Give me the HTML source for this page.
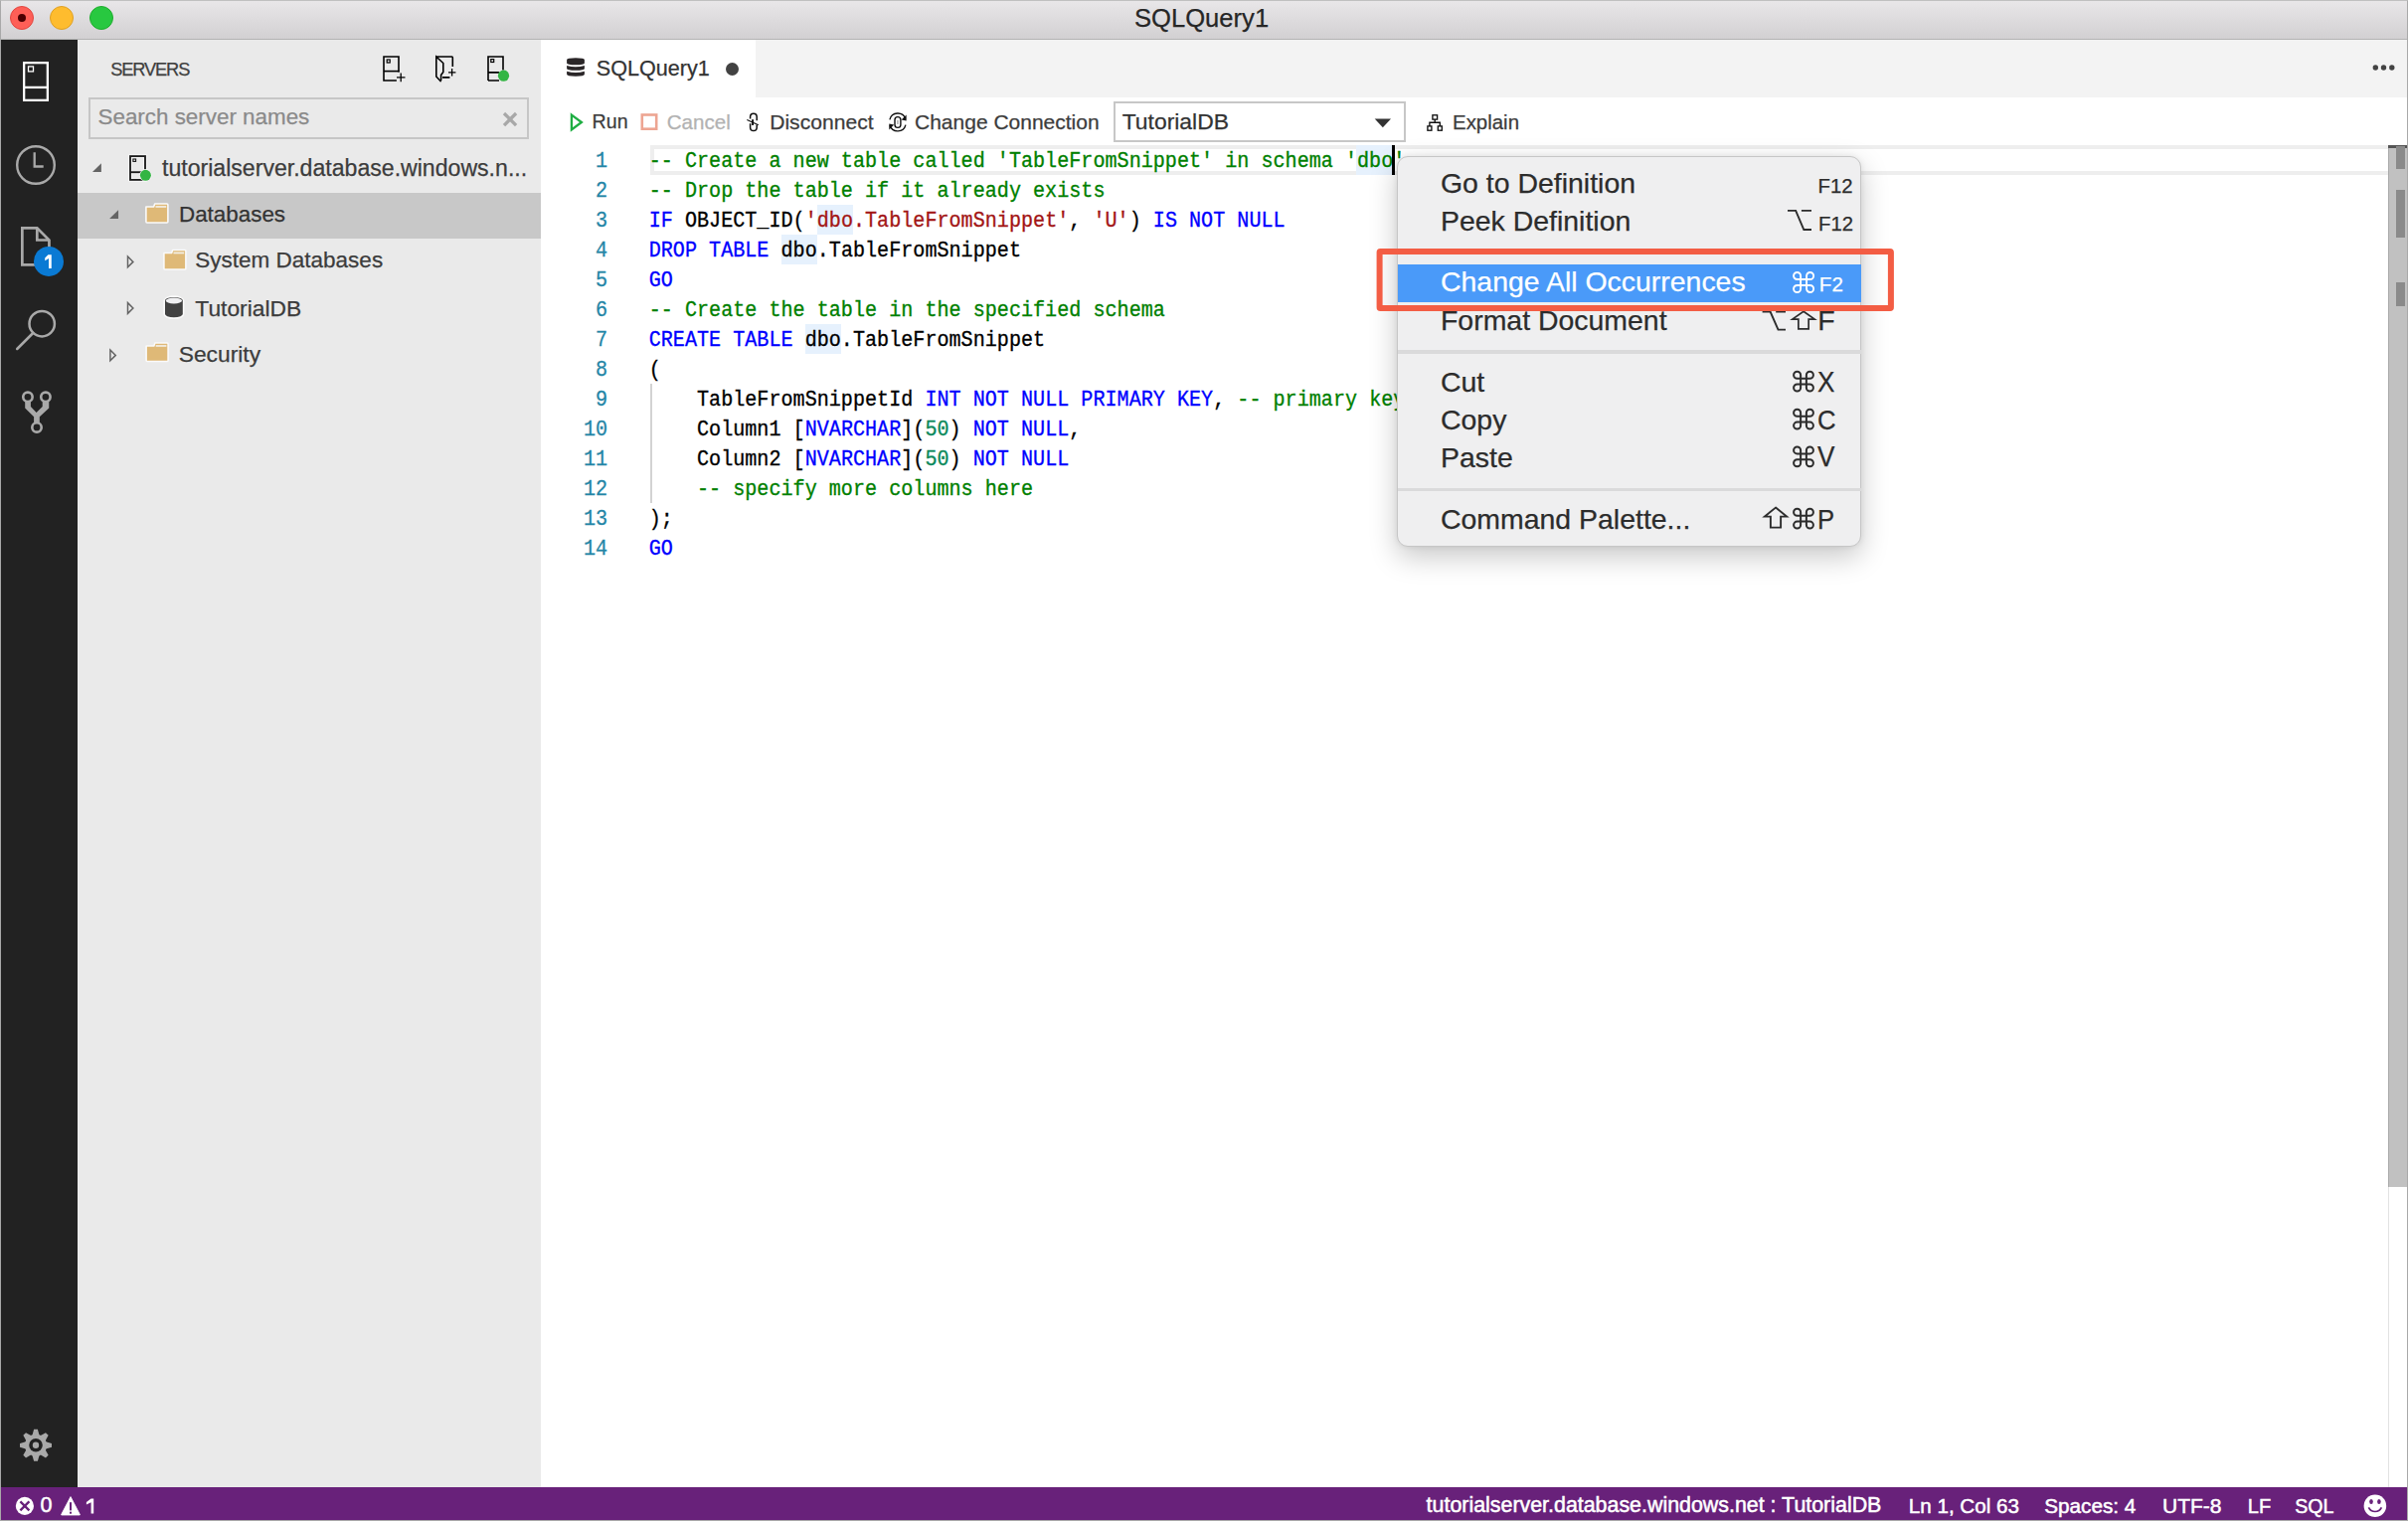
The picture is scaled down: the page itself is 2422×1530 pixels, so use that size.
<!DOCTYPE html>
<html><head><meta charset="utf-8">
<style>
*{margin:0;padding:0;box-sizing:border-box}
html,body{width:2422px;height:1530px;overflow:hidden;background:#fff}
body{position:relative;font-family:"Liberation Sans",sans-serif;}
.a{position:absolute}
.t{position:absolute;white-space:pre;line-height:1;-webkit-text-stroke:0.25px currentColor}
#frame{position:absolute;left:0;top:0;width:2422px;height:1530px;border:1px solid #a9a9a9;border-top-color:#c0c0c0;pointer-events:none;z-index:50}
#title{left:0;top:0;width:2422px;height:40px;background:linear-gradient(#e9e7e9,#d2d0d2);border-bottom:1px solid #b3b3b3}
#act{left:1px;top:40px;width:77px;height:1456px;background:#222222}
#side{left:78px;top:40px;width:466px;height:1456px;background:#eaeaea}
#tabs{left:544px;top:40px;width:1877px;height:58px;background:#f3f3f3}
#tab{left:544px;top:40px;width:216px;height:58px;background:#fff}
#status{left:1px;top:1496px;width:2420px;height:32.6px;background:#68217a}
</style></head><body>
<div id="title" class="a"></div>
<div id="act" class="a"></div>
<div id="side" class="a"></div>
<div id="tabs" class="a"></div>
<div id="tab" class="a"></div>
<div id="status" class="a"></div>
<svg class="a" style="left:0;top:0" width="130" height="40">
<circle cx="22" cy="18" r="11.5" fill="#fe5f57" stroke="#e2463f" stroke-width="1"/>
<circle cx="22" cy="18" r="4" fill="#4c0002"/>
<circle cx="62" cy="18" r="11.5" fill="#febc2e" stroke="#dfa023" stroke-width="1"/>
<circle cx="102" cy="18" r="11.5" fill="#28c840" stroke="#1dad2b" stroke-width="1"/>
</svg>
<div class="t" style="left:1141.00px;top:6.22px;font-size:25.6px;color:#262626;">SQLQuery1</div>
<svg class="a" style="left:0;top:0;z-index:2" width="78" height="1496">
<g fill="none" stroke="#fff" stroke-width="2.3">
<rect x="24.15" y="63.15" width="23.7" height="37.7"/>
<line x1="24" y1="87.9" x2="48" y2="87.9"/>
</g>
<rect x="28.5" y="66.9" width="5" height="5" fill="none" stroke="#fff" stroke-width="1.3"/>
<g fill="none" stroke="#a9a9a9" stroke-width="2.1">
<circle cx="36" cy="166" r="18.8" stroke-width="2.4"/>
<polyline points="34.7,153.2 34.7,167.5 43.7,167.5" stroke-width="2.3"/>
<path d="M22.35,229.35 H37.3 L49.45,241.5 V266.45 H22.35 Z" stroke-width="2.7"/>
<path d="M37.3,229.35 V241.5 H49.45" stroke-width="2.7"/>
<circle cx="42.2" cy="325.7" r="12.7" stroke-width="2.5"/>
<line x1="33.2" y1="335" x2="17.2" y2="351" stroke-width="2.5" stroke-linecap="round"/>
<circle cx="27.95" cy="399.3" r="4.7" stroke-width="2.6"/>
<circle cx="45.9" cy="399.3" r="4.7" stroke-width="2.6"/>
<circle cx="37" cy="429.9" r="4.7" stroke-width="2.6"/>
</g>
<polygon fill="#a9a9a9" points="25.2,403 25.2,410.6 34.1,419.2 34.1,425.5 39.8,425.5 39.8,419.2 49.25,410.6 49.25,403 42.7,403 42.7,409 36.6,414.9 30.9,409 30.9,403"/>
<circle cx="49" cy="262.9" r="15" fill="#0a7ad4"/>
<path d="M48.4,256.2 H51.75 V270 H49 V259.9 L45.2,262.3 V259.5 Z" fill="#fff"/>
<polygon fill="#a9a9a9" points="32.67,1442.90 34.09,1437.81 37.91,1437.81 39.33,1442.90 40.17,1443.73 41.35,1443.73 45.96,1441.15 48.65,1443.84 46.07,1448.45 46.07,1449.63 46.90,1450.47 51.99,1451.89 51.99,1455.71 46.90,1457.13 46.07,1457.97 46.07,1459.15 48.65,1463.76 45.96,1466.45 41.35,1463.87 40.17,1463.87 39.33,1464.70 37.91,1469.79 34.09,1469.79 32.67,1464.70 31.83,1463.87 30.65,1463.87 26.04,1466.45 23.35,1463.76 25.93,1459.15 25.93,1457.97 25.10,1457.13 20.01,1455.71 20.01,1451.89 25.10,1450.47 25.93,1449.63 25.93,1448.45 23.35,1443.84 26.04,1441.15 30.65,1443.73 31.83,1443.73"/>
<circle cx="36" cy="1453.8" r="6.8" fill="#222"/>
<circle cx="36" cy="1453.8" r="3.2" fill="#a9a9a9"/>
</svg>
<div class="a" style="left:78px;top:194px;width:466px;height:45.5px;background:#c8c8c8"></div>
<div class="t" style="left:111.20px;top:60.61px;font-size:18.3px;color:#3f3f3f;letter-spacing:-1.15px;">SERVERS</div>
<div class="a" style="left:88.7px;top:97.9px;width:443.1px;height:41.9px;border:2px solid #c6c6c6;background:#eaeaea"></div>
<div class="t" style="left:98.50px;top:106.93px;font-size:22.4px;color:#8a8a8a;">Search server names</div>
<svg class="a" style="left:0;top:0" width="544" height="400">
<g stroke="#a8a8a8" stroke-width="3.3" stroke-linecap="butt"><line x1="507" y1="114" x2="519.1" y2="126.1"/><line x1="519.1" y1="114" x2="507" y2="126.1"/></g>
<!-- header icons -->
<g fill="none" stroke="#000" stroke-width="1.6">
<path d="M398.9,81 H386 V57 H401 V72.4"/>
<line x1="386" y1="71.6" x2="401.6" y2="71.6"/>
<rect x="389.2" y="60" width="3" height="3" stroke-width="1.2"/>
<path d="M399,77.9 H407.5 M403.2,73.6 V82.2" stroke-width="1.3"/>
<path d="M438.8,57 H454.5 Q455.3,57 455.3,58 V67 M438.8,57 L445.8,63.5 V72.5 L443.6,75.5 V80.5 L443,81.5 L438.8,77 Z M445,77.9 H452.4"/>
<path d="M451,72.8 H458.4 M454.6,69 V76.6" stroke-width="1.3"/>
<path d="M491,81 V57 H506 V70.5 M491,72.9 H502 M491,81 H502"/>
<rect x="493.8" y="59.6" width="2.9" height="2.9" stroke-width="1.2"/>
</g>
<circle cx="506.5" cy="76.2" r="5.6" fill="#33b543"/>
<!-- tree -->
<polygon points="93,172.9 101.9,164.2 101.9,172.9" fill="#646464"/>
<g fill="none" stroke="#f7f7f7" stroke-width="3.6"><rect x="131" y="157.1" width="15" height="23.8"/></g>
<g fill="none" stroke="#1b1b1b" stroke-width="1.85">
<rect x="131" y="157.1" width="15" height="23.8"/>
<line x1="131" y1="173.2" x2="146" y2="173.2"/>
<rect x="133.9" y="160" width="2.7" height="2.4" stroke-width="1.1"/>
</g>
<circle cx="146.4" cy="176.3" r="6.2" fill="#f5f5f5"/>
<circle cx="146.4" cy="176.3" r="5.5" fill="#33b543"/>
<polygon points="110.1,220 119.05,211.3 119.05,220" fill="#646464"/>
<g>
<path d="M146.9,208 H154.6 L155.70000000000002,205 H167.9 Q168.9,205 168.9,206 V223 Q168.9,224 167.9,224 H147.9 Q146.9,224 146.9,223 Z" fill="#dfb977" stroke="#fafafa" stroke-width="1.6" stroke-linejoin="round"/>
<rect x="156.5" y="207.1" width="10.7" height="1.7" fill="#f3efe6"/>
</g><g>
<path d="M164.9,254.5 H172.6 L173.70000000000002,251.5 H185.9 Q186.9,251.5 186.9,252.5 V270.0 Q186.9,271.0 185.9,271.0 H165.9 Q164.9,271.0 164.9,270.0 Z" fill="#dfb977" stroke="#fafafa" stroke-width="1.6" stroke-linejoin="round"/>
<rect x="174.5" y="253.6" width="10.7" height="1.7" fill="#f3efe6"/>
</g><g>
<path d="M147.1,348 H154.79999999999998 L155.9,345 H168.1 Q169.1,345 169.1,346 V362.5 Q169.1,363.5 168.1,363.5 H148.1 Q147.1,363.5 147.1,362.5 Z" fill="#dfb977" stroke="#fafafa" stroke-width="1.6" stroke-linejoin="round"/>
<rect x="156.7" y="347.1" width="10.7" height="1.7" fill="#f3efe6"/>
</g>
<polygon points="128.5,304.6 133.9,310 128.5,315.4" fill="none" stroke="#646464" stroke-width="1.5" stroke-linejoin="miter"/>
<polygon points="128.5,258 133.9,263.4 128.5,268.8" fill="none" stroke="#646464" stroke-width="1.5"/>
<polygon points="110.9,352 116.3,357.4 110.9,362.8" fill="none" stroke="#646464" stroke-width="1.5"/>
<g>
<path d="M165.2,302.3 V316 A9.7,4.1 0 0 0 184.6,316 V302.3 A9.7,4.15 0 0 0 165.2,302.3 Z" fill="#424242" stroke="#fafafa" stroke-width="1.6"/>
<ellipse cx="174.9" cy="302.5" rx="8.2" ry="2.9" fill="#f0f0f2"/>
</g>
</svg>
<div class="t" style="left:163.00px;top:158.04px;font-size:23.1px;color:#3c3c3c;">tutorialserver.database.windows.n...</div>
<div class="t" style="left:180.00px;top:204.63px;font-size:22.4px;color:#333333;">Databases</div>
<div class="t" style="left:196.30px;top:251.25px;font-size:22.5px;color:#3c3c3c;">System Databases</div>
<div class="t" style="left:196.30px;top:298.70px;font-size:22.8px;color:#3c3c3c;">TutorialDB</div>
<div class="t" style="left:179.70px;top:344.70px;font-size:22.8px;color:#3c3c3c;">Security</div>
<svg class="a" style="left:560px;top:50px" width="40" height="40">
<g fill="#2a2628">
<path d="M10.1,10.2 Q10.1,8.3 19,8.3 Q27.9,8.3 27.9,10.2 V13.4 Q27.9,15.2 19,15.2 Q10.1,15.2 10.1,13.4 Z"/>
<path d="M10.1,16.1 Q19,18.6 27.9,16.1 V19.0 Q27.9,20.8 19,20.8 Q10.1,20.8 10.1,19.0 Z"/>
<path d="M10.1,21.7 Q19,24.2 27.9,21.7 V24.8 Q27.9,26.7 19,26.7 Q10.1,26.7 10.1,24.8 Z"/>
</g></svg>
<div class="t" style="left:599.80px;top:57.81px;font-size:21.6px;color:#333333;">SQLQuery1</div>
<div class="a" style="left:730.4px;top:62.7px;width:13px;height:13px;border-radius:50%;background:#424242"></div>
<svg class="a" style="left:2380px;top:60px" width="32" height="16">
<circle cx="9.3" cy="8" r="2.7" fill="#424242"/><circle cx="17.5" cy="8" r="2.7" fill="#424242"/><circle cx="25.8" cy="8" r="2.7" fill="#424242"/></svg>
<svg class="a" style="left:560px;top:100px" width="920" height="46">
<polygon points="574.9,15.6 584.9,23 574.9,30.4" transform="translate(-560,0)" fill="none" stroke="#1fae43" stroke-width="2.3" stroke-linejoin="miter"/>
<rect x="85.8" y="15.5" width="14.4" height="14.2" fill="none" stroke="#eda592" stroke-width="2.6"/>
<g fill="none" stroke="#111" stroke-width="1.5">
<path d="M194.6,19.5 V17.5 A3.3,3.3 0 0 1 201.2,17.5 V21.2" />
<path d="M194.6,24.3 V28.3 A3.3,3.3 0 0 0 201.2,28.3 V25.5" />
<line x1="191.3" y1="20.5" x2="202.8" y2="25.7" stroke-width="1.2"/>
</g>
<rect x="196.1" y="20.2" width="1.9" height="5.8" fill="#111"/>
<g fill="none" stroke="#111" stroke-width="1.4">
<path d="M334.9,20.3 A8.3,8.3 0 0 1 350.8,19.5"/>
<path d="M350.9,25.6 A8.3,8.3 0 0 1 335.0,26.3"/>
<rect x="340" y="17.6" width="5.9" height="10.8" rx="2.9"/>
<line x1="342.95" y1="21" x2="342.95" y2="25" stroke-width="0.9" stroke="#777"/>
</g>
<polygon points="351.6,15.6 351.6,21.4 346.6,20.6" fill="#111"/>
<polygon points="334.3,30.4 334.3,24.6 339.2,25.4" fill="#111"/>
<rect x="560" y="0" width="0" height="0"/>
</svg>
<div class="t" style="left:595.60px;top:113.40px;font-size:19.6px;color:#3c3c3c;">Run</div>
<div class="t" style="left:670.70px;top:112.56px;font-size:20.6px;color:#b2b2b2;">Cancel</div>
<div class="t" style="left:774.20px;top:112.13px;font-size:21.1px;color:#3c3c3c;">Disconnect</div>
<div class="t" style="left:920.00px;top:112.22px;font-size:21.0px;color:#3c3c3c;">Change Connection</div>
<div class="a" style="left:1120px;top:102.4px;width:294px;height:41px;border:2px solid #c7c7c7;background:#fff"></div>
<div class="t" style="left:1128.70px;top:110.71px;font-size:22.9px;color:#333333;">TutorialDB</div>
<svg class="a" style="left:1370px;top:110px" width="100" height="30">
<polygon points="12.7,9.6 29,9.6 20.85,18.2" fill="#333"/>
<g fill="none" stroke="#111" stroke-width="1.35">
<rect x="70.9" y="5.8" width="4.7" height="4.3"/>
<rect x="65.9" y="16.9" width="4.0" height="4.3"/>
<rect x="76.3" y="16.9" width="4.0" height="4.3"/>
<path d="M73.2,10.1 V13.2 M67.9,16.9 V13.2 H78.3 V16.9"/>
</g></svg>
<div class="t" style="left:1461.00px;top:112.68px;font-size:20.45px;color:#3c3c3c;">Explain</div>
<div class="a" style="left:653.5px;top:146px;width:1749px;height:30px;border:4px solid #eeeeee;border-right:none"></div>
<div class="a" style="left:1364.05px;top:146px;width:36.13px;height:30px;background:#e6f1fd"></div>
<div class="a" style="left:822.03px;top:206px;width:36.13px;height:30px;background:#e6f1fd"></div>
<div class="a" style="left:785.89px;top:236px;width:36.13px;height:30px;background:#e6f1fd"></div>
<div class="a" style="left:809.99px;top:326px;width:36.13px;height:30px;background:#e6f1fd"></div>
<div class="a" style="left:653.8px;top:386px;width:2px;height:120px;background:#d3d3d3"></div>
<div class="t" style="left:598.96px;top:152.52px;font-size:20.08px;color:#2385a6;font-family:'Liberation Mono',monospace;transform:scaleY(1.1);transform-origin:0 15.38px;">1</div>
<div class="t" style="left:652.70px;top:152.52px;font-size:20.08px;color:#000;font-family:'Liberation Mono',monospace;letter-spacing:0.025px;-webkit-text-stroke:0.3px currentColor;transform:scaleY(1.1);transform-origin:0 15.38px;"><span style="color:#008000">-- Create a new table called 'TableFromSnippet' in schema 'dbo'</span></div>
<div class="t" style="left:598.96px;top:182.52px;font-size:20.08px;color:#2385a6;font-family:'Liberation Mono',monospace;transform:scaleY(1.1);transform-origin:0 15.38px;">2</div>
<div class="t" style="left:652.70px;top:182.52px;font-size:20.08px;color:#000;font-family:'Liberation Mono',monospace;letter-spacing:0.025px;-webkit-text-stroke:0.3px currentColor;transform:scaleY(1.1);transform-origin:0 15.38px;"><span style="color:#008000">-- Drop the table if it already exists</span></div>
<div class="t" style="left:598.96px;top:212.52px;font-size:20.08px;color:#2385a6;font-family:'Liberation Mono',monospace;transform:scaleY(1.1);transform-origin:0 15.38px;">3</div>
<div class="t" style="left:652.70px;top:212.52px;font-size:20.08px;color:#000;font-family:'Liberation Mono',monospace;letter-spacing:0.025px;-webkit-text-stroke:0.3px currentColor;transform:scaleY(1.1);transform-origin:0 15.38px;"><span style="color:#0000ff">IF</span><span style="color:#000000"> OBJECT_ID(</span><span style="color:#a31515">'dbo.TableFromSnippet'</span><span style="color:#000000">, </span><span style="color:#a31515">'U'</span><span style="color:#000000">) </span><span style="color:#0000ff">IS NOT NULL</span></div>
<div class="t" style="left:598.96px;top:242.52px;font-size:20.08px;color:#2385a6;font-family:'Liberation Mono',monospace;transform:scaleY(1.1);transform-origin:0 15.38px;">4</div>
<div class="t" style="left:652.70px;top:242.52px;font-size:20.08px;color:#000;font-family:'Liberation Mono',monospace;letter-spacing:0.025px;-webkit-text-stroke:0.3px currentColor;transform:scaleY(1.1);transform-origin:0 15.38px;"><span style="color:#0000ff">DROP TABLE</span><span style="color:#000000"> dbo.TableFromSnippet</span></div>
<div class="t" style="left:598.96px;top:272.52px;font-size:20.08px;color:#2385a6;font-family:'Liberation Mono',monospace;transform:scaleY(1.1);transform-origin:0 15.38px;">5</div>
<div class="t" style="left:652.70px;top:272.52px;font-size:20.08px;color:#000;font-family:'Liberation Mono',monospace;letter-spacing:0.025px;-webkit-text-stroke:0.3px currentColor;transform:scaleY(1.1);transform-origin:0 15.38px;"><span style="color:#0000ff">GO</span></div>
<div class="t" style="left:598.96px;top:302.52px;font-size:20.08px;color:#2385a6;font-family:'Liberation Mono',monospace;transform:scaleY(1.1);transform-origin:0 15.38px;">6</div>
<div class="t" style="left:652.70px;top:302.52px;font-size:20.08px;color:#000;font-family:'Liberation Mono',monospace;letter-spacing:0.025px;-webkit-text-stroke:0.3px currentColor;transform:scaleY(1.1);transform-origin:0 15.38px;"><span style="color:#008000">-- Create the table in the specified schema</span></div>
<div class="t" style="left:598.96px;top:332.52px;font-size:20.08px;color:#2385a6;font-family:'Liberation Mono',monospace;transform:scaleY(1.1);transform-origin:0 15.38px;">7</div>
<div class="t" style="left:652.70px;top:332.52px;font-size:20.08px;color:#000;font-family:'Liberation Mono',monospace;letter-spacing:0.025px;-webkit-text-stroke:0.3px currentColor;transform:scaleY(1.1);transform-origin:0 15.38px;"><span style="color:#0000ff">CREATE TABLE</span><span style="color:#000000"> dbo.TableFromSnippet</span></div>
<div class="t" style="left:598.96px;top:362.52px;font-size:20.08px;color:#2385a6;font-family:'Liberation Mono',monospace;transform:scaleY(1.1);transform-origin:0 15.38px;">8</div>
<div class="t" style="left:652.70px;top:362.52px;font-size:20.08px;color:#000;font-family:'Liberation Mono',monospace;letter-spacing:0.025px;-webkit-text-stroke:0.3px currentColor;transform:scaleY(1.1);transform-origin:0 15.38px;"><span style="color:#000000">(</span></div>
<div class="t" style="left:598.96px;top:392.52px;font-size:20.08px;color:#2385a6;font-family:'Liberation Mono',monospace;transform:scaleY(1.1);transform-origin:0 15.38px;">9</div>
<div class="t" style="left:652.70px;top:392.52px;font-size:20.08px;color:#000;font-family:'Liberation Mono',monospace;letter-spacing:0.025px;-webkit-text-stroke:0.3px currentColor;transform:scaleY(1.1);transform-origin:0 15.38px;"><span style="color:#000000">    TableFromSnippetId </span><span style="color:#0000ff">INT NOT NULL PRIMARY KEY</span><span style="color:#000000">, </span><span style="color:#008000">-- primary key column</span></div>
<div class="t" style="left:586.91px;top:422.52px;font-size:20.08px;color:#2385a6;font-family:'Liberation Mono',monospace;transform:scaleY(1.1);transform-origin:0 15.38px;">10</div>
<div class="t" style="left:652.70px;top:422.52px;font-size:20.08px;color:#000;font-family:'Liberation Mono',monospace;letter-spacing:0.025px;-webkit-text-stroke:0.3px currentColor;transform:scaleY(1.1);transform-origin:0 15.38px;"><span style="color:#000000">    Column1 [</span><span style="color:#0000ff">NVARCHAR</span><span style="color:#000000">](</span><span style="color:#09885a">50</span><span style="color:#000000">) </span><span style="color:#0000ff">NOT NULL</span><span style="color:#000000">,</span></div>
<div class="t" style="left:586.91px;top:452.52px;font-size:20.08px;color:#2385a6;font-family:'Liberation Mono',monospace;transform:scaleY(1.1);transform-origin:0 15.38px;">11</div>
<div class="t" style="left:652.70px;top:452.52px;font-size:20.08px;color:#000;font-family:'Liberation Mono',monospace;letter-spacing:0.025px;-webkit-text-stroke:0.3px currentColor;transform:scaleY(1.1);transform-origin:0 15.38px;"><span style="color:#000000">    Column2 [</span><span style="color:#0000ff">NVARCHAR</span><span style="color:#000000">](</span><span style="color:#09885a">50</span><span style="color:#000000">) </span><span style="color:#0000ff">NOT NULL</span></div>
<div class="t" style="left:586.91px;top:482.52px;font-size:20.08px;color:#2385a6;font-family:'Liberation Mono',monospace;transform:scaleY(1.1);transform-origin:0 15.38px;">12</div>
<div class="t" style="left:652.70px;top:482.52px;font-size:20.08px;color:#000;font-family:'Liberation Mono',monospace;letter-spacing:0.025px;-webkit-text-stroke:0.3px currentColor;transform:scaleY(1.1);transform-origin:0 15.38px;"><span style="color:#000000">    </span><span style="color:#008000">-- specify more columns here</span></div>
<div class="t" style="left:586.91px;top:512.52px;font-size:20.08px;color:#2385a6;font-family:'Liberation Mono',monospace;transform:scaleY(1.1);transform-origin:0 15.38px;">13</div>
<div class="t" style="left:652.70px;top:512.52px;font-size:20.08px;color:#000;font-family:'Liberation Mono',monospace;letter-spacing:0.025px;-webkit-text-stroke:0.3px currentColor;transform:scaleY(1.1);transform-origin:0 15.38px;"><span style="color:#000000">);</span></div>
<div class="t" style="left:586.91px;top:542.52px;font-size:20.08px;color:#2385a6;font-family:'Liberation Mono',monospace;transform:scaleY(1.1);transform-origin:0 15.38px;">14</div>
<div class="t" style="left:652.70px;top:542.52px;font-size:20.08px;color:#000;font-family:'Liberation Mono',monospace;letter-spacing:0.025px;-webkit-text-stroke:0.3px currentColor;transform:scaleY(1.1);transform-origin:0 15.38px;"><span style="color:#0000ff">GO</span></div>
<div class="a" style="left:1399.79px;top:146px;width:3.4px;height:30px;background:#000"></div>
<div class="a" style="left:2402px;top:146px;width:19px;height:1048px;background:#c1c1c1;border-left:1px solid #a9a9a9"></div>
<div class="a" style="left:2402px;top:1194px;width:1px;height:302px;background:#e2e2e2"></div>
<div class="a" style="left:2402px;top:146px;width:19px;height:3px;background:#555"></div>
<div class="a" style="left:2410.4px;top:146.5px;width:8.8px;height:23.3px;background:#8a8a8a"></div>
<div class="a" style="left:2410.4px;top:190.9px;width:8.8px;height:47.9px;background:#8a8a8a"></div>
<div class="a" style="left:2410.4px;top:284.2px;width:8.8px;height:23.6px;background:#8a8a8a"></div>
<div class="a" style="left:1405.4px;top:157.2px;width:467px;height:392.5px;border-radius:11px;background:#efeff0;border:1px solid #c6c6c6;box-shadow:0 10px 28px rgba(0,0,0,0.22),0 0 6px rgba(0,0,0,0.08);z-index:10"></div>
<div class="a" style="left:1406.2px;top:266.2px;width:466px;height:37.4px;background:#4a9af9;z-index:11"></div>
<div class="a" style="left:1406px;top:352.3px;width:466px;height:3.8px;background:#dadadb;z-index:11"></div>
<div class="a" style="left:1406px;top:490.7px;width:466px;height:3.6px;background:#dadadb;z-index:11"></div>
<div class="t" style="left:1449.00px;top:169.61px;font-size:28.45px;color:#2c2c2c;z-index:12;">Go to Definition</div>
<div class="t" style="left:1449.00px;top:207.81px;font-size:28.45px;color:#2c2c2c;z-index:12;">Peek Definition</div>
<div class="t" style="left:1449.00px;top:269.41px;font-size:28.45px;color:#fff;z-index:12;">Change All Occurrences</div>
<div class="t" style="left:1449.00px;top:308.01px;font-size:28.45px;color:#2c2c2c;z-index:12;">Format Document</div>
<div class="t" style="left:1449.00px;top:369.71px;font-size:28.45px;color:#2c2c2c;z-index:12;">Cut</div>
<div class="t" style="left:1449.00px;top:407.91px;font-size:28.45px;color:#2c2c2c;z-index:12;">Copy</div>
<div class="t" style="left:1449.00px;top:445.51px;font-size:28.45px;color:#2c2c2c;z-index:12;">Paste</div>
<div class="t" style="left:1449.00px;top:507.61px;font-size:28.45px;color:#2c2c2c;z-index:12;">Command Palette...</div>
<div class="t" style="left:1828.60px;top:176.51px;font-size:20.3px;color:#2c2c2c;z-index:12;">F12</div>
<div class="t" style="left:1829.00px;top:214.51px;font-size:20.3px;color:#2c2c2c;z-index:12;">F12</div>
<div class="t" style="left:1829.80px;top:276.46px;font-size:20.6px;color:#fff;z-index:12;">F2</div>
<div class="t" style="left:1828.30px;top:307.67px;font-size:28.5px;color:#2c2c2c;z-index:12;">F</div>
<div class="t" style="left:1828.30px;top:369.65px;font-size:29px;color:#2c2c2c;transform:scaleX(0.9);transform-origin:0 0;z-index:12;">X</div>
<div class="t" style="left:1827.60px;top:408.07px;font-size:28.5px;color:#2c2c2c;transform:scaleX(0.9);transform-origin:0 0;z-index:12;">C</div>
<div class="t" style="left:1828.30px;top:445.25px;font-size:29px;color:#2c2c2c;transform:scaleX(0.9);transform-origin:0 0;z-index:12;">V</div>
<div class="t" style="left:1828.20px;top:507.87px;font-size:28.5px;color:#2c2c2c;transform:scaleX(0.9);transform-origin:0 0;z-index:12;">P</div>
<svg class="a" style="left:0;top:0;z-index:13" width="2422" height="600">
<path d="M1798,211.9 H1806.16 L1814.32,231 H1822 M1811.92,211.9 H1822" fill="none" stroke="#2c2c2c" stroke-width="1.9"/>
<path d="M1811.13,281.03 H1817.07 V286.97 H1811.13 Z M1811.13,281.03 V277.49 A3.54,3.54 0 1 0 1807.59,281.03 H1811.13 M1817.07,281.03 V277.49 A3.54,3.54 0 1 1 1820.61,281.03 H1817.07 M1817.07,286.97 V290.51 A3.54,3.54 0 1 0 1820.61,286.97 H1817.07 M1811.13,286.97 V290.51 A3.54,3.54 0 1 1 1807.59,286.97 H1811.13 " fill="none" stroke="#fff" stroke-width="1.9"/>
<path d="M1772.6,313.5 H1780.56 L1788.51,331.6 H1796 M1786.17,313.5 H1796" fill="none" stroke="#2c2c2c" stroke-width="1.9"/>
<path d="M1814.00,313.2 L1825.2,321.12 H1819.15 V330.8 H1808.85 V321.12 H1802.8 Z" fill="none" stroke="#2c2c2c" stroke-width="1.7" stroke-linejoin="miter"/>
<path d="M1811.12,380.72 H1816.88 V386.48 H1811.12 Z M1811.12,380.72 V377.21 A3.51,3.51 0 1 0 1807.61,380.72 H1811.12 M1816.88,380.72 V377.21 A3.51,3.51 0 1 1 1820.39,380.72 H1816.88 M1816.88,386.48 V389.99 A3.51,3.51 0 1 0 1820.39,386.48 H1816.88 M1811.12,386.48 V389.99 A3.51,3.51 0 1 1 1807.61,386.48 H1811.12 " fill="none" stroke="#2c2c2c" stroke-width="2.0"/>
<path d="M1811.12,418.82 H1816.88 V424.58 H1811.12 Z M1811.12,418.82 V415.31 A3.51,3.51 0 1 0 1807.61,418.82 H1811.12 M1816.88,418.82 V415.31 A3.51,3.51 0 1 1 1820.39,418.82 H1816.88 M1816.88,424.58 V428.09 A3.51,3.51 0 1 0 1820.39,424.58 H1816.88 M1811.12,424.58 V428.09 A3.51,3.51 0 1 1 1807.61,424.58 H1811.12 " fill="none" stroke="#2c2c2c" stroke-width="2.0"/>
<path d="M1811.12,456.42 H1816.88 V462.18 H1811.12 Z M1811.12,456.42 V452.91 A3.51,3.51 0 1 0 1807.61,456.42 H1811.12 M1816.88,456.42 V452.91 A3.51,3.51 0 1 1 1820.39,456.42 H1816.88 M1816.88,462.18 V465.69 A3.51,3.51 0 1 0 1820.39,462.18 H1816.88 M1811.12,462.18 V465.69 A3.51,3.51 0 1 1 1807.61,462.18 H1811.12 " fill="none" stroke="#2c2c2c" stroke-width="2.0"/>
<path d="M1811.12,518.82 H1816.88 V524.58 H1811.12 Z M1811.12,518.82 V515.31 A3.51,3.51 0 1 0 1807.61,518.82 H1811.12 M1816.88,518.82 V515.31 A3.51,3.51 0 1 1 1820.39,518.82 H1816.88 M1816.88,524.58 V528.09 A3.51,3.51 0 1 0 1820.39,524.58 H1816.88 M1811.12,524.58 V528.09 A3.51,3.51 0 1 1 1807.61,524.58 H1811.12 " fill="none" stroke="#2c2c2c" stroke-width="2.0"/>
<path d="M1786.00,510.6 L1797.1,519.60 H1791.11 V530.6 H1780.89 V519.60 H1774.9 Z" fill="none" stroke="#2c2c2c" stroke-width="1.9" stroke-linejoin="miter"/>
<rect x="1387.6" y="253" width="514.3" height="57" rx="0.8" fill="none" stroke="#f35d44" stroke-width="6"/>
</svg>
<svg class="a" style="left:0;top:1490px;z-index:3" width="2422" height="40">
<circle cx="24.9" cy="24.9" r="9.1" fill="#fff"/>
<g stroke="#68217a" stroke-width="2.3"><line x1="20.4" y1="20.4" x2="29.4" y2="29.4"/><line x1="29.4" y1="20.4" x2="20.4" y2="29.4"/></g>
<path d="M71,15.6 L80.4,33.6 Q80.6,34 80,34 H62 Q61.4,34 61.6,33.6 Z" fill="#fff" stroke="#fff" stroke-width="0.8" stroke-linejoin="round"/>
<rect x="70" y="21.2" width="2" height="8.2" fill="#68217a"/>
<rect x="70" y="30.7" width="2" height="2" fill="#68217a"/>
<path d="M91.6,17.4 H94.2 V32.6 H91.6 V21.3 L86.9,23.6 V20.9 Z" fill="#fff"/>
<circle cx="2388.9" cy="24.7" r="11.3" fill="#fff"/>
<ellipse cx="2385" cy="20.4" rx="1.8" ry="2.5" fill="#68217a"/>
<ellipse cx="2392.9" cy="20.4" rx="1.8" ry="2.5" fill="#68217a"/>
<path d="M2382.4,26.4 A7.2,7.2 0 0 0 2395.4,26.4" fill="none" stroke="#68217a" stroke-width="1.7"/>
</svg>
<div class="t" style="left:40.60px;top:1504.20px;font-size:21.5px;color:#fff;z-index:3;-webkit-text-stroke:0.5px #fff;">0</div>
<div class="t" style="left:1434.60px;top:1504.08px;font-size:21.4px;color:#fff;z-index:3;-webkit-text-stroke:0.5px #fff;">tutorialserver.database.windows.net : TutorialDB</div>
<div class="t" style="left:1919.80px;top:1504.76px;font-size:20.6px;color:#fff;z-index:3;-webkit-text-stroke:0.5px #fff;">Ln 1, Col 63</div>
<div class="t" style="left:2056.30px;top:1504.67px;font-size:20.7px;color:#fff;z-index:3;-webkit-text-stroke:0.5px #fff;">Spaces: 4</div>
<div class="t" style="left:2175.00px;top:1504.42px;font-size:21.0px;color:#fff;z-index:3;-webkit-text-stroke:0.5px #fff;">UTF-8</div>
<div class="t" style="left:2260.80px;top:1505.27px;font-size:20.0px;color:#fff;z-index:3;-webkit-text-stroke:0.5px #fff;">LF</div>
<div class="t" style="left:2308.20px;top:1505.60px;font-size:19.6px;color:#fff;z-index:3;-webkit-text-stroke:0.5px #fff;">SQL</div>
<div id="frame"></div>
</body></html>
